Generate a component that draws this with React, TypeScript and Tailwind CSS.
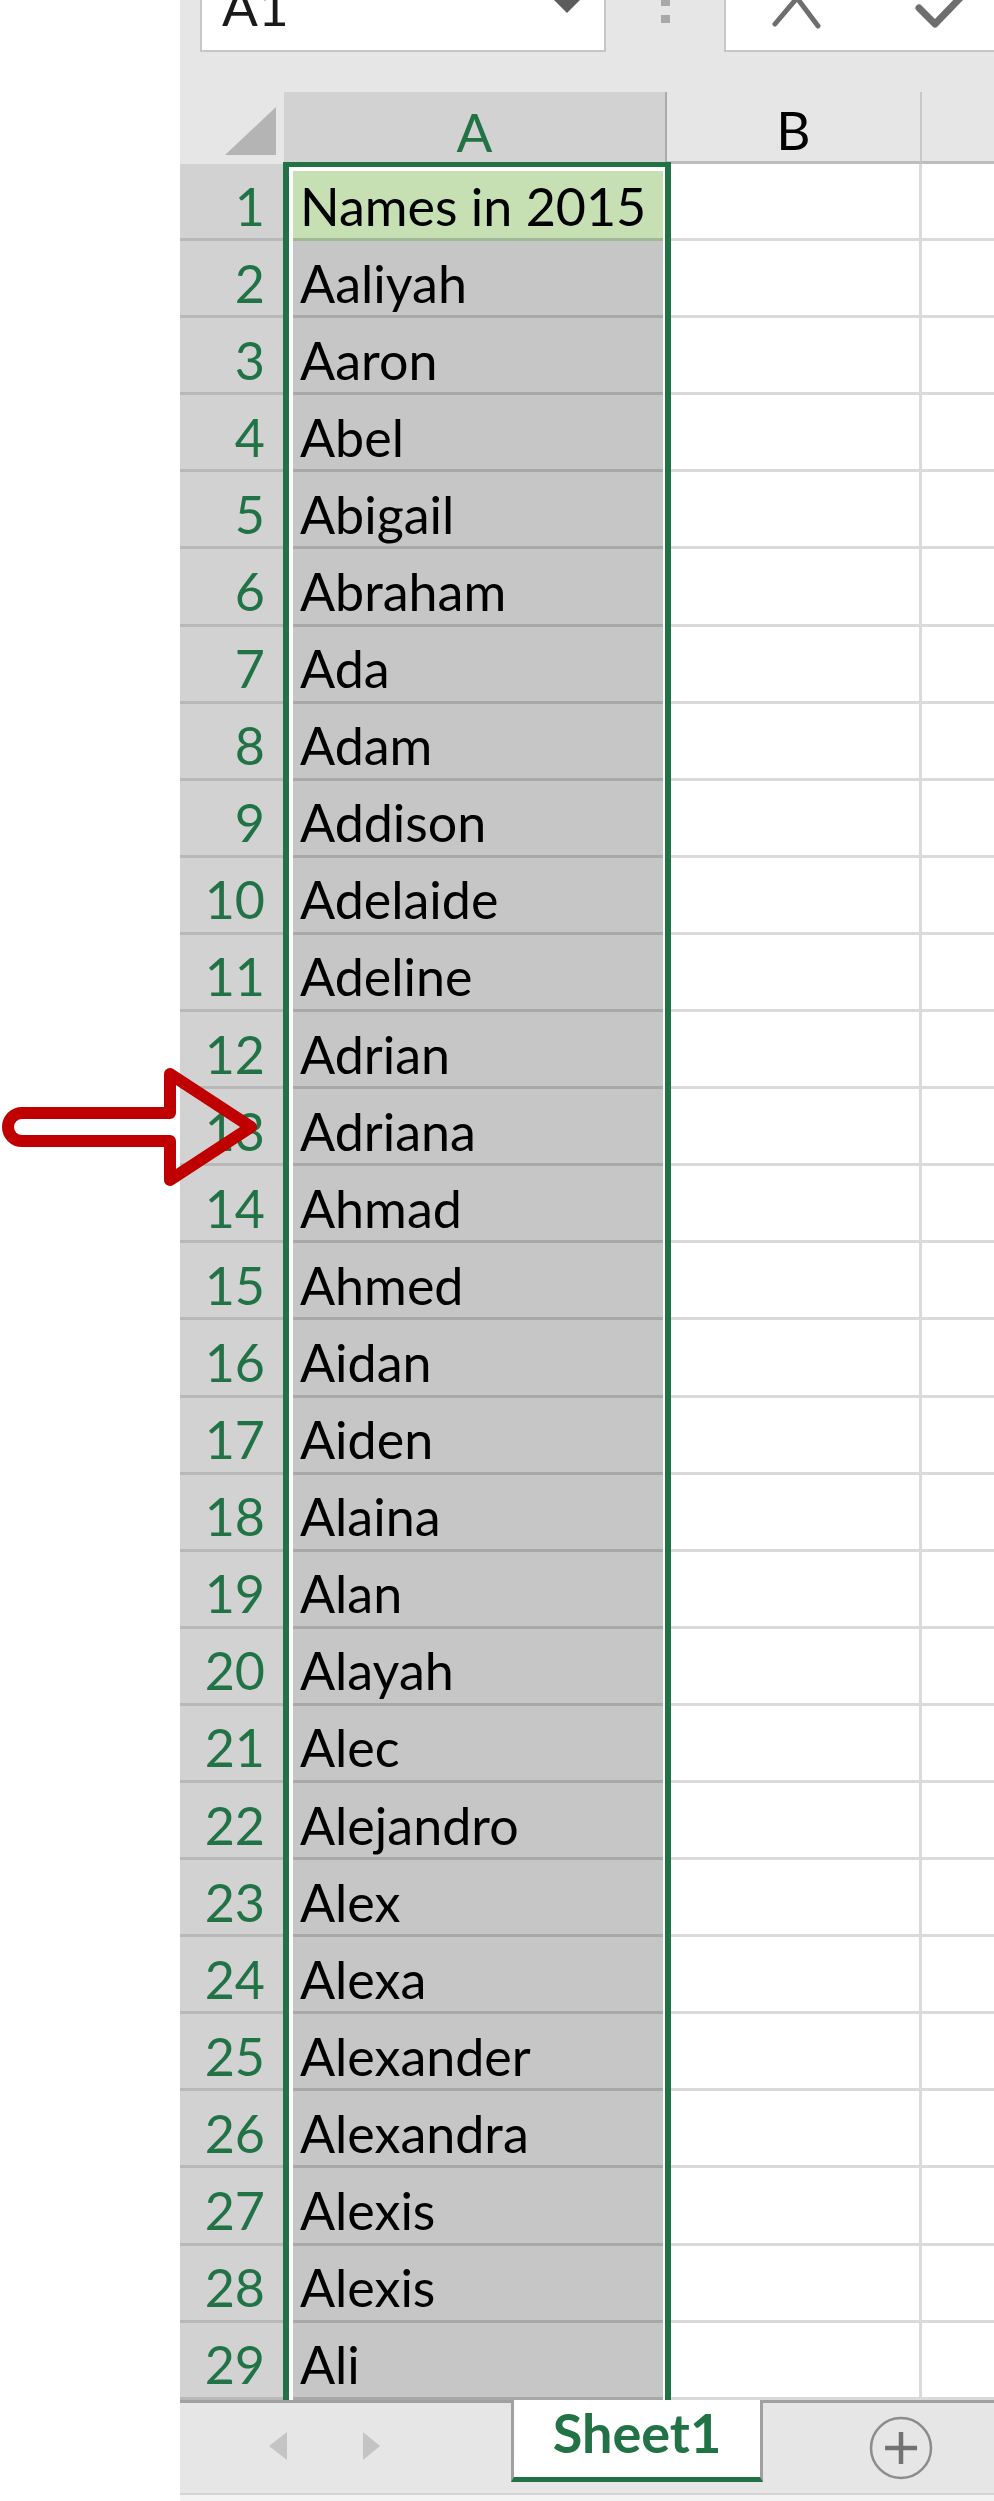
import React from "react";

const names = [
  "Names in 2015", "Aaliyah", "Aaron", "Abel", "Abigail", "Abraham", "Ada", "Adam", "Addison",
  "Adelaide", "Adeline", "Adrian", "Adriana", "Ahmad", "Ahmed", "Aidan", "Aiden", "Alaina",
  "Alan", "Alayah", "Alec", "Alejandro", "Alex", "Alexa", "Alexander", "Alexandra", "Alexis",
  "Alexis", "Ali",
];

const font = { fontFamily: '"Lato", "Noto Sans", sans-serif' };

export default function App() {
  return (
    <div className="relative flex w-[994px] h-[2501px] overflow-hidden bg-white" style={font}>
      <div className="w-[180px] shrink-0 bg-white" />
      <div className="flex flex-1 flex-col bg-[#e6e6e6]">
        {/* formula bar */}
        <div className="flex h-[92px] shrink-0 items-start">
          <div className="ml-[20px] flex h-[52px] w-[406px] items-start border-x-2 border-b-2 border-[#c6c6c6] bg-white">
            <span className="-mt-[20px] ml-[20px] text-[53px] leading-[52px] text-[#1a1a1a]">A1</span>
            <svg className="ml-auto mr-[24px]" width="26" height="13" viewBox="0 0 26 13">
              <polygon points="0,0 26,0 13,13" fill="#5c5c5c" />
            </svg>
          </div>
          <div className="ml-[55px] flex w-[10px] flex-col gap-[9px] pt-0">
            <div className="-mt-[2px] h-[8px] w-[9px] bg-[#a8a8a8]" />
            <div className="h-[8px] w-[9px] bg-[#a8a8a8]" />
          </div>
          <div className="ml-[53px] flex h-[52px] flex-1 items-start border-b-2 border-l-2 border-[#c6c6c6] bg-white">
            <svg className="ml-[45px]" width="52" height="30" viewBox="0 0 52 30">
              <path d="M4 24 L26 -2 M26 -2 L47 26" stroke="#6e6e6e" strokeWidth="5" fill="none" strokeLinecap="round" />
            </svg>
            <svg className="ml-[92px]" width="54" height="30" viewBox="0 0 54 30">
              <path d="M4 8 L20 24 L47 -4" stroke="#6e6e6e" strokeWidth="7" fill="none" strokeLinecap="round" strokeLinejoin="round" />
            </svg>
          </div>
        </div>

        {/* column headers */}
        <div className="flex h-[72px] shrink-0">
          <div className="relative w-[104px] shrink-0">
            <svg className="absolute left-0 top-0" width="104" height="72" viewBox="0 0 104 72">
              <polygon points="96,15 96,63 45,63" fill="#b4b4b4" />
            </svg>
          </div>
          <div className="flex w-[383px] shrink-0 items-center justify-center border-r-2 border-[#ababab] bg-[#d2d2d2] pt-[6px] text-[53px] leading-none text-[#217346]">
            A
          </div>
          <div className="flex w-[255px] shrink-0 items-center justify-center border-b-[3px] border-r-2 border-[#c8c8c8] border-b-[#bdbdbd] pt-[6px] text-[53px] leading-none text-black">
            B
          </div>
          <div className="flex-1 border-b-[3px] border-[#bdbdbd]" />
        </div>

        {/* rows */}
        <div className="flex shrink-0 flex-col">
          {names.map((n, i) => (
            <div key={i} className="flex h-[77.1px]">
              <div className="flex w-[104px] shrink-0 items-center justify-end border-b-[3px] border-[#b8b8b8] bg-[#d2d2d2] pr-[19px] pt-[9px] text-[52px] leading-none text-[#217346]">
                {i + 1}
              </div>
              <div
                className={
                  i === 0
                    ? "flex w-[383px] shrink-0 items-center border-b-[3px] border-[#a3b894] bg-[#c6e0b4] pl-[16px] pt-[9px] text-[52px] leading-none text-black"
                    : "flex w-[383px] shrink-0 items-center border-b-[3px] border-[#a8a8a8] bg-[#c6c6c6] pl-[16px] pt-[9px] text-[52px] leading-none text-black"
                }
              >
                {n}
              </div>
              <div className="w-[255px] shrink-0 border-b-[3px] border-r-[3px] border-[#dadada] bg-white" />
              <div className="flex-1 border-b-[3px] border-[#dadada] bg-white" />
            </div>
          ))}
        </div>

        {/* sheet tabs */}
        <div className="flex h-[93px] shrink-0 items-start">
          <div className="flex h-full w-[331px] shrink-0 items-start border-t-[3px] border-[#a0a0a0]">
            <svg className="ml-[89px] mt-[29px]" width="18" height="28" viewBox="0 0 18 28">
              <polygon points="18,0 18,28 0,14" fill="#c4c4c4" />
            </svg>
            <svg className="ml-[76px] mt-[29px]" width="17" height="28" viewBox="0 0 17 28">
              <polygon points="0,0 0,28 17,14" fill="#c4c4c4" />
            </svg>
          </div>
          <div className="flex h-[82px] w-[252px] shrink-0 items-center justify-center border-x-[3px] border-b-[5px] border-x-[#a0a0a0] border-b-[#217346] bg-white pb-[10px] text-[54px] font-bold leading-none text-[#217346]">
            Sheet1
          </div>
          <div className="flex h-full flex-1 items-start border-t-[3px] border-[#a0a0a0]">
            <svg className="ml-[105px] mt-[13px]" width="66" height="64" viewBox="0 0 66 64">
              <circle cx="33" cy="32" r="30" stroke="#8c8c8c" strokeWidth="2.5" fill="none" />
              <path d="M17 32 H49 M33 16 V48" stroke="#737373" strokeWidth="4.5" />
            </svg>
          </div>
        </div>
        <div className="h-[8px] shrink-0 border-t-2 border-[#d4d4d4] bg-[#f3f3f3]" />
      </div>

      {/* selection outline over column A */}
      <div className="absolute left-[283px] top-[162px] h-[2238px] w-[388px] border-x-[6px] border-t-[5px] border-[#217346]">
        <div className="h-full w-full border-l-[4px] border-r-[2px] border-t-[4px] border-white" />
      </div>

      {/* red arrow */}
      <svg className="absolute left-0 top-[1060px]" width="270" height="135" viewBox="0 0 270 135">
        <path
          d="M170 53 L170 14 L251 67 L170 120 L170 81 L22 81 A14 14 0 0 1 22 53 Z"
          stroke="#c00000"
          strokeWidth="12"
          fill="none"
          strokeLinejoin="round"
        />
      </svg>
    </div>
  );
}
